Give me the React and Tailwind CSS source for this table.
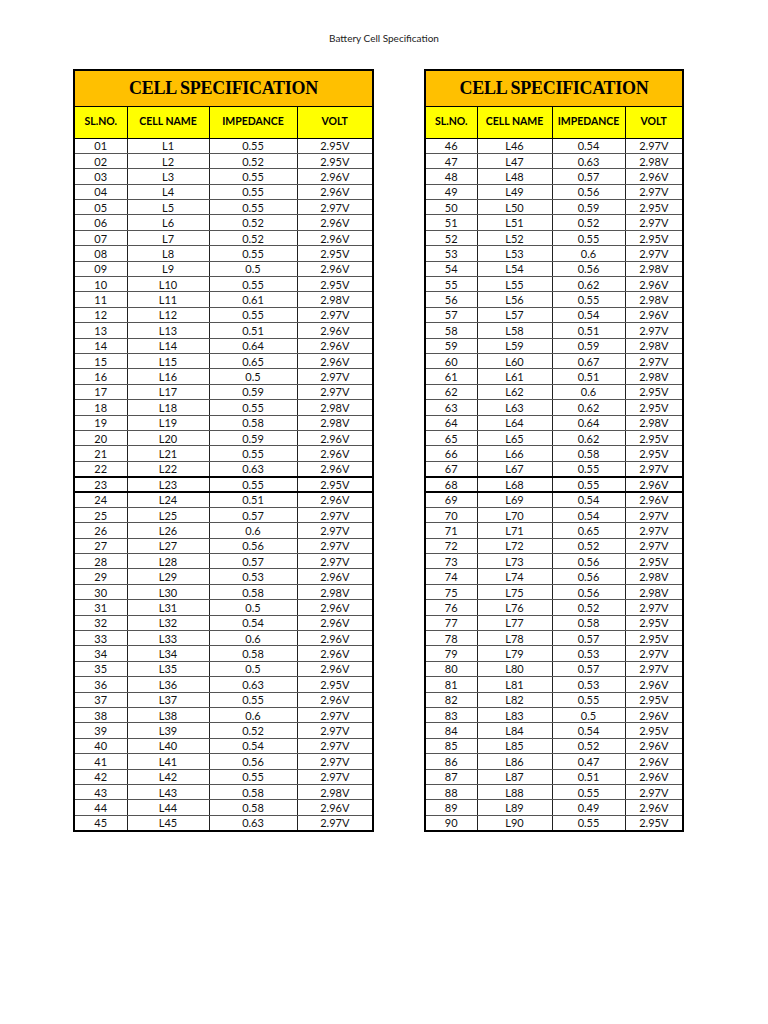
import React from "react";

const left = [
  ["01", "L1", "0.55", "2.95V"],
  ["02", "L2", "0.52", "2.95V"],
  ["03", "L3", "0.55", "2.96V"],
  ["04", "L4", "0.55", "2.96V"],
  ["05", "L5", "0.55", "2.97V"],
  ["06", "L6", "0.52", "2.96V"],
  ["07", "L7", "0.52", "2.96V"],
  ["08", "L8", "0.55", "2.95V"],
  ["09", "L9", "0.5", "2.96V"],
  ["10", "L10", "0.55", "2.95V"],
  ["11", "L11", "0.61", "2.98V"],
  ["12", "L12", "0.55", "2.97V"],
  ["13", "L13", "0.51", "2.96V"],
  ["14", "L14", "0.64", "2.96V"],
  ["15", "L15", "0.65", "2.96V"],
  ["16", "L16", "0.5", "2.97V"],
  ["17", "L17", "0.59", "2.97V"],
  ["18", "L18", "0.55", "2.98V"],
  ["19", "L19", "0.58", "2.98V"],
  ["20", "L20", "0.59", "2.96V"],
  ["21", "L21", "0.55", "2.96V"],
  ["22", "L22", "0.63", "2.96V"],
  ["23", "L23", "0.55", "2.95V"],
  ["24", "L24", "0.51", "2.96V"],
  ["25", "L25", "0.57", "2.97V"],
  ["26", "L26", "0.6", "2.97V"],
  ["27", "L27", "0.56", "2.97V"],
  ["28", "L28", "0.57", "2.97V"],
  ["29", "L29", "0.53", "2.96V"],
  ["30", "L30", "0.58", "2.98V"],
  ["31", "L31", "0.5", "2.96V"],
  ["32", "L32", "0.54", "2.96V"],
  ["33", "L33", "0.6", "2.96V"],
  ["34", "L34", "0.58", "2.96V"],
  ["35", "L35", "0.5", "2.96V"],
  ["36", "L36", "0.63", "2.95V"],
  ["37", "L37", "0.55", "2.96V"],
  ["38", "L38", "0.6", "2.97V"],
  ["39", "L39", "0.52", "2.97V"],
  ["40", "L40", "0.54", "2.97V"],
  ["41", "L41", "0.56", "2.97V"],
  ["42", "L42", "0.55", "2.97V"],
  ["43", "L43", "0.58", "2.98V"],
  ["44", "L44", "0.58", "2.96V"],
  ["45", "L45", "0.63", "2.97V"],
];

const right = [
  ["46", "L46", "0.54", "2.97V"],
  ["47", "L47", "0.63", "2.98V"],
  ["48", "L48", "0.57", "2.96V"],
  ["49", "L49", "0.56", "2.97V"],
  ["50", "L50", "0.59", "2.95V"],
  ["51", "L51", "0.52", "2.97V"],
  ["52", "L52", "0.55", "2.95V"],
  ["53", "L53", "0.6", "2.97V"],
  ["54", "L54", "0.56", "2.98V"],
  ["55", "L55", "0.62", "2.96V"],
  ["56", "L56", "0.55", "2.98V"],
  ["57", "L57", "0.54", "2.96V"],
  ["58", "L58", "0.51", "2.97V"],
  ["59", "L59", "0.59", "2.98V"],
  ["60", "L60", "0.67", "2.97V"],
  ["61", "L61", "0.51", "2.98V"],
  ["62", "L62", "0.6", "2.95V"],
  ["63", "L63", "0.62", "2.95V"],
  ["64", "L64", "0.64", "2.98V"],
  ["65", "L65", "0.62", "2.95V"],
  ["66", "L66", "0.58", "2.95V"],
  ["67", "L67", "0.55", "2.97V"],
  ["68", "L68", "0.55", "2.96V"],
  ["69", "L69", "0.54", "2.96V"],
  ["70", "L70", "0.54", "2.97V"],
  ["71", "L71", "0.65", "2.97V"],
  ["72", "L72", "0.52", "2.97V"],
  ["73", "L73", "0.56", "2.95V"],
  ["74", "L74", "0.56", "2.98V"],
  ["75", "L75", "0.56", "2.98V"],
  ["76", "L76", "0.52", "2.97V"],
  ["77", "L77", "0.58", "2.95V"],
  ["78", "L78", "0.57", "2.95V"],
  ["79", "L79", "0.53", "2.97V"],
  ["80", "L80", "0.57", "2.97V"],
  ["81", "L81", "0.53", "2.96V"],
  ["82", "L82", "0.55", "2.95V"],
  ["83", "L83", "0.5", "2.96V"],
  ["84", "L84", "0.54", "2.95V"],
  ["85", "L85", "0.52", "2.96V"],
  ["86", "L86", "0.47", "2.96V"],
  ["87", "L87", "0.51", "2.96V"],
  ["88", "L88", "0.55", "2.97V"],
  ["89", "L89", "0.49", "2.96V"],
  ["90", "L90", "0.55", "2.95V"],
];

function SpecTable({ rows, widths, marked }) {
  return (
    <table className="table-fixed border-collapse border-2 border-black font-['Lato',sans-serif] text-[11px] text-[#111]">
      <colgroup>
        {widths.map((w, i) => (
          <col key={i} style={{ width: w }} />
        ))}
      </colgroup>
      <thead>
        <tr className="h-[36px] bg-[#ffc000]">
          <th
            colSpan={4}
            className="border-b border-black font-['Liberation_Serif',serif] text-[18px] font-bold tracking-[-0.3px] text-black"
          >
            CELL SPECIFICATION
          </th>
        </tr>
        <tr className="h-[32px] bg-[#ffff00] text-[10.5px] font-bold text-black">
          <th className="border border-black">SL.NO.</th>
          <th className="border border-black">CELL NAME</th>
          <th className="border border-black">IMPEDANCE</th>
          <th className="border border-black">VOLT</th>
        </tr>
      </thead>
      <tbody>
        {rows.map((r) => (
          <tr
            key={r[0]}
            className={
              r[0] === marked
                ? "h-[15.4px] border-y-2 border-black"
                : "h-[15.4px]"
            }
          >
            {r.map((c, i) => (
              <td
                key={i}
                className="border-x border-x-[#222] border-y border-y-[#555] p-0 text-center leading-[13px]"
              >
                {c}
              </td>
            ))}
          </tr>
        ))}
      </tbody>
    </table>
  );
}

export default function App() {
  return (
    <div className="w-[768px] h-[1024px] bg-white">
      <div className="pt-[31px] text-center font-['Lato',sans-serif] text-[10px] text-[#222]">
        Battery Cell Specification
      </div>
      <div className="mt-[23px] flex items-start gap-[50px] pl-[73px]">
        <SpecTable rows={left} widths={[53, 82, 88, 76]} marked="23" />
        <SpecTable rows={right} widths={[52, 75, 73, 58]} marked="68" />
      </div>
    </div>
  );
}
